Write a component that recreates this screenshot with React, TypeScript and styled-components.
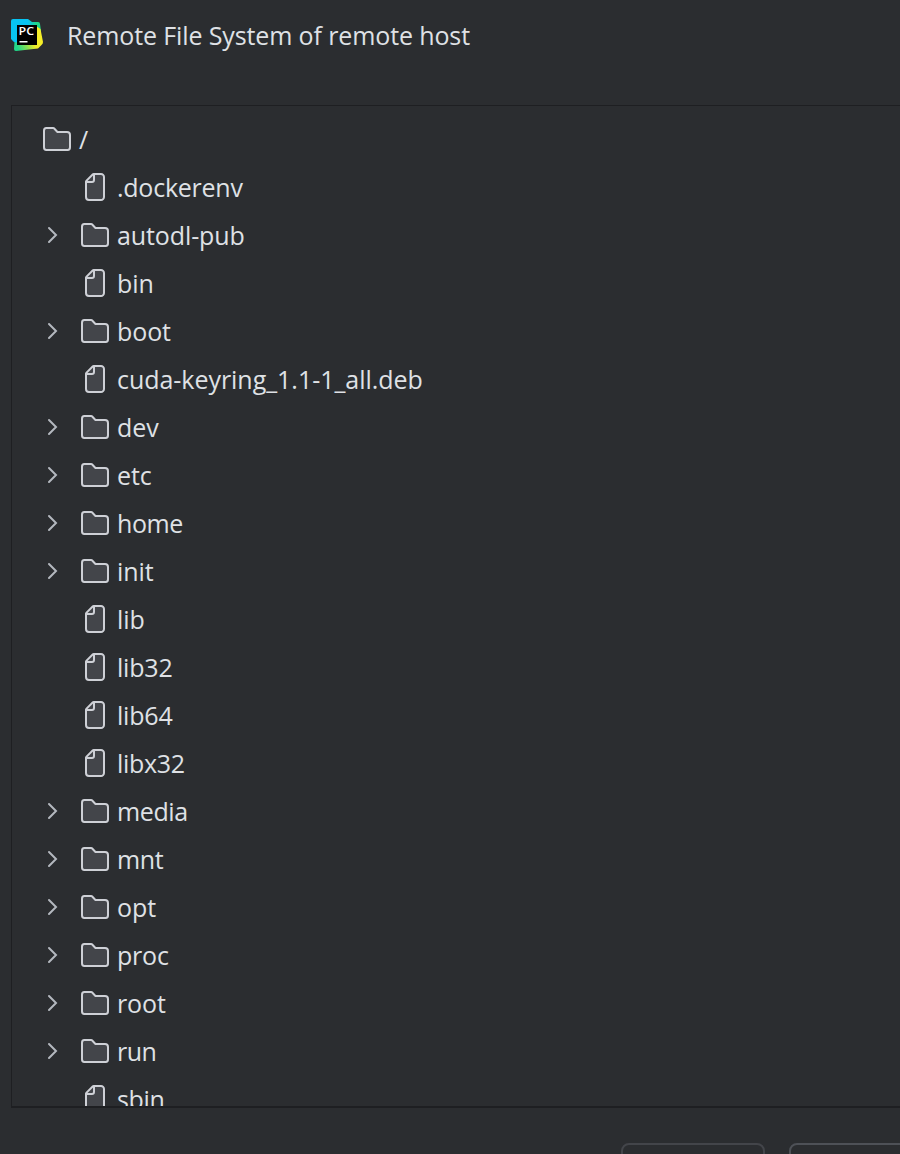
import React from "react";
import styled, { createGlobalStyle } from "styled-components";

const GlobalStyle = createGlobalStyle`
  * { box-sizing: border-box; }
  html, body { margin: 0; background: #2b2d30; overflow: hidden; }
`;

const Dialog = styled.div`
  width: 900px;
  height: 1154px;
  overflow: hidden;
  display: flex;
  flex-direction: column;
  background: #2b2d30;
  color: #dfe1e5;
  font-family: "Open Sans", "Noto Sans", sans-serif;
  font-size: 25px;
`;

const TitleBar = styled.header`
  height: 105px;
  flex: none;
  display: flex;
  align-items: flex-start;
  padding: 18px 0 0 10px;
  gap: 22px;
`;

const Title = styled.h1`
  margin: 0;
  font-size: 25px;
  font-weight: 400;
  line-height: 34px;
  white-space: nowrap;
  letter-spacing: -0.12px;
`;

const Tree = styled.ul`
  list-style: none;
  height: 1003px;
  flex: none;
  margin: 0 0 0 11px;
  padding: 10px 0 0 25px;
  overflow: hidden;
  border: solid #1e1f22;
  border-width: 1px 0 2px 1px;
`;

const Row = styled.li<{ $root?: boolean }>`
  height: 48px;
  display: flex;
  align-items: center;
  padding-left: ${(p) => (p.$root ? 4 : 0)}px;
`;

const Icon = styled.svg`
  width: 32px;
  height: 32px;
  flex: none;
  display: block;
  margin-bottom: 2px;
`;

const Toggle = styled.span`
  width: 42px;
  flex: none;
`;

const Label = styled.span<{ $tracking: number }>`
  margin-left: 6px;
  padding-bottom: 2px;
  line-height: 46px;
  white-space: nowrap;
  letter-spacing: ${(p) => p.$tracking}px;
`;

const Footer = styled.footer`
  display: flex;
  flex: none;
  gap: 24px;
  padding: 35px 0 0 621px;
`;

const Button = styled.button<{ $edge: string }>`
  width: 144px;
  height: 48px;
  flex: none;
  background: transparent;
  border: 2px solid ${(p) => p.$edge};
  border-radius: 8px;
`;

const FolderIcon = () => (
  <Icon viewBox="0 0 16 16" fill="none">
    <path
      d="M8.106 4.346L8.253 4.5H13C13.828 4.5 14.5 5.172 14.5 6V12.133C14.5 12.953 13.932 13.5 13.367 13.5H2.633C2.068 13.5 1.5 12.953 1.5 12.133V3.867C1.5 3.047 2.068 2.5 2.633 2.5H6.122C6.258 2.5 6.388 2.556 6.483 2.654L8.106 4.346Z"
      fill="#43454a"
      stroke="#ced0d6"
    />
  </Icon>
);

const FileIcon = () => (
  <Icon viewBox="0 0 16 16" fill="none">
    <path
      d="M7.3 1.5H11A1.5 1.5 0 0 1 12.5 3V13A1.5 1.5 0 0 1 11 14.5H5A1.5 1.5 0 0 1 3.5 13V5.3Q3.5 5.1 3.65 4.95L6.95 1.65Q7.1 1.5 7.3 1.5Z"
      fill="#43454a"
      stroke="#ced0d6"
    />
    <path d="M7.5 1.8V4.5A1 1 0 0 1 6.5 5.5H3.8" stroke="#ced0d6" />
  </Icon>
);

const Chevron = () => (
  <Icon viewBox="0 0 16 16" fill="none">
    <path d="M6 11.5L9.5 8L6 4.5" stroke="#b4b8bf" strokeLinecap="round" />
  </Icon>
);

const LogoSvg = styled.svg`
  width: 35px;
  height: 35px;
  flex: none;
`;

const Logo = () => (
  <LogoSvg viewBox="0 0 35 35">
    <defs>
      <linearGradient id="lower" x1="5" y1="30" x2="27" y2="20" gradientUnits="userSpaceOnUse">
        <stop offset="0.1" stopColor="#21d789" />
        <stop offset="0.5" stopColor="#8fe14e" />
        <stop offset="0.8" stopColor="#f0ec2a" />
        <stop offset="1" stopColor="#f5ee28" />
      </linearGradient>
      <linearGradient id="upper" x1="2" y1="12" x2="32" y2="14" gradientUnits="userSpaceOnUse">
        <stop offset="0.5" stopColor="#07c3f2" />
        <stop offset="0.8" stopColor="#21d789" />
      </linearGradient>
    </defs>
    <path d="M3 1H18L22 4L28 4Q30 4 30 6L31 13L27 21L10 27L4 24L1 21V3Q1 1 3 1Z" fill="url(#upper)" />
    <path d="M26 8L30.5 11L33 24Q33 26 31.5 27L28 30.5L6 33Q4 33 4 31L4.5 24L14 26Z" fill="url(#lower)" />
    <rect x="7" y="7" width="20" height="20" fill="#000" />
    <rect x="9.5" y="23" width="8" height="1.5" fill="#fff" />
    <text
      x="8.6"
      y="16.8"
      fill="#fff"
      fontFamily="Open Sans, sans-serif"
      fontSize="10.5"
      fontWeight="600"
      textLength="15.5"
      lengthAdjust="spacingAndGlyphs"
    >
      PC
    </text>
  </LogoSvg>
);

type Entry = { name: string; folder?: boolean; tracking?: number };

const entries: Entry[] = [
  { name: ".dockerenv", tracking: -0.25 },
  { name: "autodl-pub", folder: true },
  { name: "bin" },
  { name: "boot", folder: true },
  { name: "cuda-keyring_1.1-1_all.deb", tracking: -0.04 },
  { name: "dev", folder: true },
  { name: "etc", folder: true },
  { name: "home", folder: true, tracking: -0.4 },
  { name: "init", folder: true },
  { name: "lib" },
  { name: "lib32", tracking: -0.2 },
  { name: "lib64", tracking: -0.2 },
  { name: "libx32", tracking: -0.3 },
  { name: "media", folder: true, tracking: -0.4 },
  { name: "mnt", folder: true, tracking: -0.4 },
  { name: "opt", folder: true },
  { name: "proc", folder: true, tracking: -0.2 },
  { name: "root", folder: true },
  { name: "run", folder: true, tracking: -0.5 },
  { name: "sbin", tracking: -0.3 },
];

export default function App() {
  return (
    <Dialog>
      <GlobalStyle />
      <TitleBar>
        <Logo />
        <Title>Remote File System of remote host</Title>
      </TitleBar>
      <Tree>
        <Row $root>
          <FolderIcon />
          <Label $tracking={0}>/</Label>
        </Row>
        {entries.map(({ name, folder, tracking = -0.1 }) => (
          <Row key={name}>
            <Toggle>{folder && <Chevron />}</Toggle>
            {folder ? <FolderIcon /> : <FileIcon />}
            <Label $tracking={tracking}>{name}</Label>
          </Row>
        ))}
      </Tree>
      <Footer>
        <Button $edge="#43454a" />
        <Button $edge="#4e5157" />
      </Footer>
    </Dialog>
  );
}
